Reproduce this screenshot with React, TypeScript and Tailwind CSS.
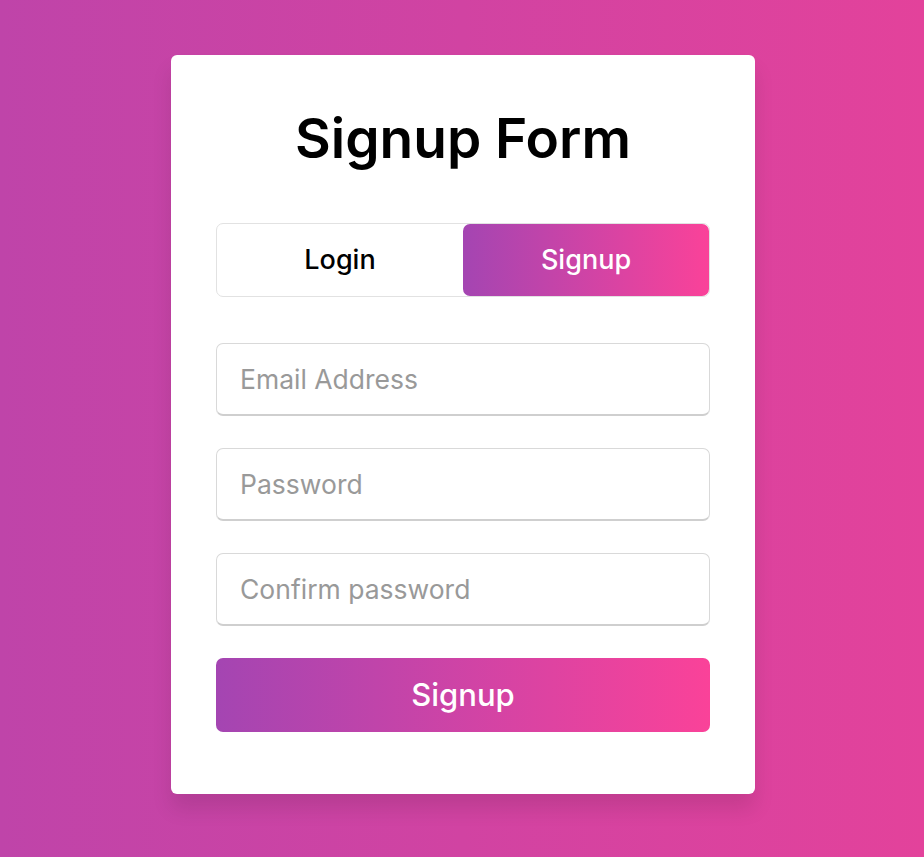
import { useState } from "react";

const font = { fontFamily: "Inter, 'Noto Sans', sans-serif" };

function Field({ placeholder, type = "text" }: { placeholder: string; type?: string }) {
  return (
    <input
      type={type}
      placeholder={placeholder}
      style={font}
      className="h-[73px] w-full rounded-[7px] border border-b-2 border-[#d9d9d9] border-b-[#cfcfcf] bg-white pl-[23px] text-[26.5px] text-[#333] outline-none placeholder:text-[#999]"
    />
  );
}

export default function App() {
  const [tab, setTab] = useState<"login" | "signup">("signup");
  return (
    <div
      style={font}
      className="flex h-[857px] w-full justify-center bg-[linear-gradient(to_right,#bf44a9,#e3429b)] pl-[2px] pt-[55px]"
    >
      <div className="h-[739px] w-[584px] rounded-[6px] bg-white px-[45px] pt-[50px] shadow-[0_15px_20px_rgba(0,0,0,0.1)]">
        <h1 className="text-center text-[55px] font-semibold leading-[66px] text-black">Signup Form</h1>

        <div className="mt-[52px] flex h-[74px] rounded-[7px] border border-[#e2e2e2]">
          <button
            onClick={() => setTab("login")}
            className={`flex-1 rounded-[7px] text-[27px] font-medium ${
              tab === "login" ? "bg-[linear-gradient(to_right,#a445b2,#fa4299)] text-white" : "text-black"
            }`}
          >
            Login
          </button>
          <button
            onClick={() => setTab("signup")}
            className={`flex-1 rounded-[7px] text-[27px] font-medium ${
              tab === "signup" ? "bg-[linear-gradient(to_right,#a445b2,#fa4299)] text-white" : "text-black"
            }`}
          >
            Signup
          </button>
        </div>

        <div className="mt-[46px] flex flex-col gap-[32px]">
          <Field placeholder="Email Address" />
          <Field placeholder="Password" type="password" />
          <Field placeholder="Confirm password" type="password" />
          <button className="h-[74px] w-full rounded-[7px] bg-[linear-gradient(to_right,#a445b2,#fa4299)] text-[31px] font-medium text-white">
            Signup
          </button>
        </div>
      </div>
    </div>
  );
}
